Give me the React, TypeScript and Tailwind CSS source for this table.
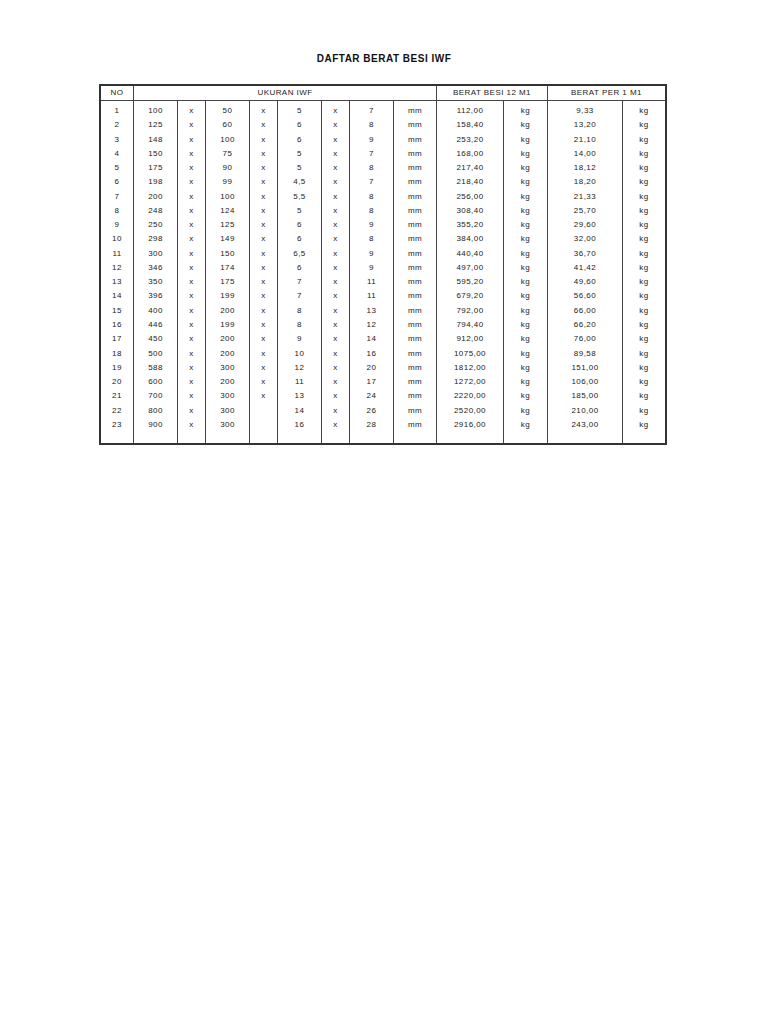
const rows: string[][] = [
  ["1", "100", "x", "50", "x", "5", "x", "7", "mm", "112,00", "kg", "9,33", "kg"],
  ["2", "125", "x", "60", "x", "6", "x", "8", "mm", "158,40", "kg", "13,20", "kg"],
  ["3", "148", "x", "100", "x", "6", "x", "9", "mm", "253,20", "kg", "21,10", "kg"],
  ["4", "150", "x", "75", "x", "5", "x", "7", "mm", "168,00", "kg", "14,00", "kg"],
  ["5", "175", "x", "90", "x", "5", "x", "8", "mm", "217,40", "kg", "18,12", "kg"],
  ["6", "198", "x", "99", "x", "4,5", "x", "7", "mm", "218,40", "kg", "18,20", "kg"],
  ["7", "200", "x", "100", "x", "5,5", "x", "8", "mm", "256,00", "kg", "21,33", "kg"],
  ["8", "248", "x", "124", "x", "5", "x", "8", "mm", "308,40", "kg", "25,70", "kg"],
  ["9", "250", "x", "125", "x", "6", "x", "9", "mm", "355,20", "kg", "29,60", "kg"],
  ["10", "298", "x", "149", "x", "6", "x", "8", "mm", "384,00", "kg", "32,00", "kg"],
  ["11", "300", "x", "150", "x", "6,5", "x", "9", "mm", "440,40", "kg", "36,70", "kg"],
  ["12", "346", "x", "174", "x", "6", "x", "9", "mm", "497,00", "kg", "41,42", "kg"],
  ["13", "350", "x", "175", "x", "7", "x", "11", "mm", "595,20", "kg", "49,60", "kg"],
  ["14", "396", "x", "199", "x", "7", "x", "11", "mm", "679,20", "kg", "56,60", "kg"],
  ["15", "400", "x", "200", "x", "8", "x", "13", "mm", "792,00", "kg", "66,00", "kg"],
  ["16", "446", "x", "199", "x", "8", "x", "12", "mm", "794,40", "kg", "66,20", "kg"],
  ["17", "450", "x", "200", "x", "9", "x", "14", "mm", "912,00", "kg", "76,00", "kg"],
  ["18", "500", "x", "200", "x", "10", "x", "16", "mm", "1075,00", "kg", "89,58", "kg"],
  ["19", "588", "x", "300", "x", "12", "x", "20", "mm", "1812,00", "kg", "151,00", "kg"],
  ["20", "600", "x", "200", "x", "11", "x", "17", "mm", "1272,00", "kg", "106,00", "kg"],
  ["21", "700", "x", "300", "x", "13", "x", "24", "mm", "2220,00", "kg", "185,00", "kg"],
  ["22", "800", "x", "300", "", "14", "x", "26", "mm", "2520,00", "kg", "210,00", "kg"],
  ["23", "900", "x", "300", "", "16", "x", "28", "mm", "2916,00", "kg", "243,00", "kg"],
];

// column widths in px, inside the 2px outer frame
const widths = ["w-[32px]", "w-[44px]", "w-[28px]", "w-[44px]", "w-[28px]", "w-[44px]", "w-[28px]", "w-[44px]", "w-[43px]", "w-[67px]", "w-[44px]", "w-[75px]", "w-[43px]"];

export default function App() {
  return (
    <div
      className="min-h-[1024px] w-full bg-white text-[#222]"
      style={{ fontFamily: '"Liberation Sans", Arial, sans-serif' }}
    >
      <div className="pt-[53px] h-[65px] text-center text-[10px] leading-[12px] font-bold tracking-[0.5px] text-[#111]">
        DAFTAR BERAT BESI IWF
      </div>

      <div className="mt-[19px] ml-[99px] w-[568px] border-2 border-[#333] text-[8px] tracking-[0.45px]">
        <div className="flex h-[15px] border-b border-[#444] leading-[14px]">
          <div className="w-[32px] text-center">NO</div>
          <div className="w-[303px] border-l border-[#444] text-center">UKURAN IWF</div>
          <div className="w-[111px] border-l border-[#444] text-center">BERAT BESI 12 M1</div>
          <div className="w-[118px] border-l border-[#444] text-center">BERAT PER 1 M1</div>
        </div>

        <div className="flex">
          {widths.map((w, ci) => (
            <div
              key={ci}
              className={`${w} flex flex-col pt-[3px] pb-[11px] ${ci > 0 ? "border-l border-[#444]" : ""}`}
            >
              {rows.map((r, ri) => (
                <div key={ri} className="h-[14.27px] leading-[14.27px] text-center whitespace-nowrap">
                  {r[ci]}
                </div>
              ))}
            </div>
          ))}
        </div>
      </div>
    </div>
  );
}
